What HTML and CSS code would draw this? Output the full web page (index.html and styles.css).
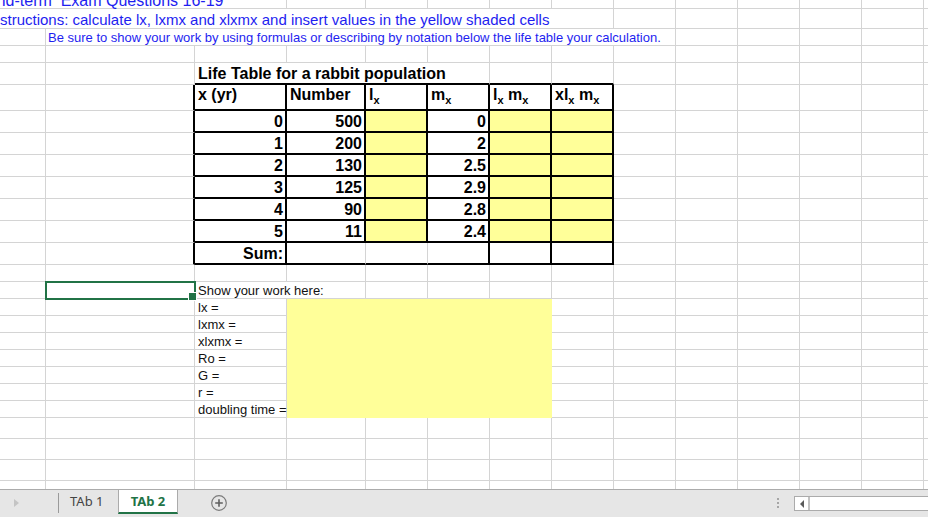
FILE: index.html
```html
<!DOCTYPE html>
<html>
<head>
<meta charset="utf-8">
<title>Life Table</title>
<link rel="stylesheet" href="styles.css">
</head>
<body>
<div class="sheet">
  <!-- row 1 -->
  <div class="row r1">
    <div class="c s3 blue t1"><span>id-term&nbsp; Exam Questions 16-19</span></div>
    <div class="c"></div><div class="c"></div><div class="c"></div><div class="c"></div><div class="c"></div><div class="c"></div><div class="c"></div><div class="c"></div><div class="c"></div><div class="c"></div><div class="c"></div>
  </div>
  <!-- row 2 -->
  <div class="row h20">
    <div class="c s8 blue t2"><span>structions: calculate lx, lxmx and xlxmx and insert values in the yellow shaded cells</span></div>
    <div class="c"></div><div class="c"></div><div class="c"></div><div class="c"></div><div class="c"></div><div class="c"></div>
  </div>
  <!-- row 3 -->
  <div class="row h17">
    <div class="c"></div>
    <div class="c s8 blue t3"><span>Be sure to show your work by using formulas or describing by notation below the life table your calculation.</span></div>
    <div class="c"></div><div class="c"></div><div class="c"></div><div class="c"></div><div class="c"></div>
  </div>
  <!-- row 4 -->
  <div class="row h17">
    <div class="c"></div><div class="c"></div><div class="c"></div><div class="c"></div><div class="c"></div><div class="c"></div><div class="c"></div><div class="c"></div><div class="c"></div><div class="c"></div><div class="c"></div><div class="c"></div><div class="c"></div><div class="c"></div>
  </div>
  <!-- row 5: title -->
  <div class="row h22">
    <div class="c"></div><div class="c"></div>
    <div class="c s4 tb title"><span>Life Table for a rabbit population</span></div>
    <div class="c tb"></div><div class="c tb"></div>
    <div class="c"></div><div class="c"></div><div class="c"></div><div class="c"></div><div class="c"></div><div class="c"></div>
  </div>
  <!-- row 6: header -->
  <div class="row h26">
    <div class="c"></div><div class="c tl"></div>
    <div class="c t hd"><span>x (yr)</span></div>
    <div class="c t hd"><span>Number</span></div>
    <div class="c t hd"><span>l<sub>x</sub></span></div>
    <div class="c t hd"><span>m<sub>x</sub></span></div>
    <div class="c t hd"><span>l<sub>x</sub> m<sub>x</sub></span></div>
    <div class="c t hd"><span>xl<sub>x</sub> m<sub>x</sub></span></div>
    <div class="c"></div><div class="c"></div><div class="c"></div><div class="c"></div><div class="c"></div><div class="c"></div>
  </div>
  <!-- data rows -->
  <div class="row h22">
    <div class="c"></div><div class="c tl"></div>
    <div class="c t num"><span>0</span></div><div class="c t num"><span>500</span></div>
    <div class="c t yl"></div><div class="c t num"><span>0</span></div>
    <div class="c t yl"></div><div class="c t yl"></div>
    <div class="c"></div><div class="c"></div><div class="c"></div><div class="c"></div><div class="c"></div><div class="c"></div>
  </div>
  <div class="row h22">
    <div class="c"></div><div class="c tl"></div>
    <div class="c t num"><span>1</span></div><div class="c t num"><span>200</span></div>
    <div class="c t yl"></div><div class="c t num"><span>2</span></div>
    <div class="c t yl"></div><div class="c t yl"></div>
    <div class="c"></div><div class="c"></div><div class="c"></div><div class="c"></div><div class="c"></div><div class="c"></div>
  </div>
  <div class="row h22">
    <div class="c"></div><div class="c tl"></div>
    <div class="c t num"><span>2</span></div><div class="c t num"><span>130</span></div>
    <div class="c t yl"></div><div class="c t num"><span>2.5</span></div>
    <div class="c t yl"></div><div class="c t yl"></div>
    <div class="c"></div><div class="c"></div><div class="c"></div><div class="c"></div><div class="c"></div><div class="c"></div>
  </div>
  <div class="row h22">
    <div class="c"></div><div class="c tl"></div>
    <div class="c t num"><span>3</span></div><div class="c t num"><span>125</span></div>
    <div class="c t yl"></div><div class="c t num"><span>2.9</span></div>
    <div class="c t yl"></div><div class="c t yl"></div>
    <div class="c"></div><div class="c"></div><div class="c"></div><div class="c"></div><div class="c"></div><div class="c"></div>
  </div>
  <div class="row h22">
    <div class="c"></div><div class="c tl"></div>
    <div class="c t num"><span>4</span></div><div class="c t num"><span>90</span></div>
    <div class="c t yl"></div><div class="c t num"><span>2.8</span></div>
    <div class="c t yl"></div><div class="c t yl"></div>
    <div class="c"></div><div class="c"></div><div class="c"></div><div class="c"></div><div class="c"></div><div class="c"></div>
  </div>
  <div class="row h22">
    <div class="c"></div><div class="c tl"></div>
    <div class="c t num"><span>5</span></div><div class="c t num"><span>11</span></div>
    <div class="c t yl"></div><div class="c t num"><span>2.4</span></div>
    <div class="c t yl"></div><div class="c t yl"></div>
    <div class="c"></div><div class="c"></div><div class="c"></div><div class="c"></div><div class="c"></div><div class="c"></div>
  </div>
  <!-- sum row -->
  <div class="row h22">
    <div class="c"></div><div class="c tl"></div>
    <div class="c t num"><span>Sum:</span></div>
    <div class="c t gr"></div><div class="c t gr"></div><div class="c t"></div>
    <div class="c t"></div><div class="c t"></div>
    <div class="c"></div><div class="c"></div><div class="c"></div><div class="c"></div><div class="c"></div><div class="c"></div>
  </div>
  <!-- row 14 -->
  <div class="row h17">
    <div class="c"></div><div class="c"></div><div class="c"></div><div class="c"></div><div class="c"></div><div class="c"></div><div class="c"></div><div class="c"></div><div class="c"></div><div class="c"></div><div class="c"></div><div class="c"></div><div class="c"></div><div class="c"></div>
  </div>
  <!-- row 15 -->
  <div class="row h17">
    <div class="c"></div><div class="c sel"></div>
    <div class="c s2 w"><span>Show your work here:</span></div>
    <div class="c"></div><div class="c"></div><div class="c"></div><div class="c"></div><div class="c"></div><div class="c"></div><div class="c"></div><div class="c"></div><div class="c"></div><div class="c"></div>
  </div>
  <!-- work rows -->
  <div class="row h17">
    <div class="c"></div><div class="c"></div>
    <div class="c w"><span>lx =</span></div>
    <div class="c wy"></div><div class="c wy"></div><div class="c wy"></div><div class="c wy"></div>
    <div class="c"></div><div class="c"></div><div class="c"></div><div class="c"></div><div class="c"></div><div class="c"></div><div class="c"></div>
  </div>
  <div class="row h17">
    <div class="c"></div><div class="c"></div>
    <div class="c w"><span>lxmx =</span></div>
    <div class="c wy"></div><div class="c wy"></div><div class="c wy"></div><div class="c wy"></div>
    <div class="c"></div><div class="c"></div><div class="c"></div><div class="c"></div><div class="c"></div><div class="c"></div><div class="c"></div>
  </div>
  <div class="row h17">
    <div class="c"></div><div class="c"></div>
    <div class="c w"><span>xlxmx =</span></div>
    <div class="c wy"></div><div class="c wy"></div><div class="c wy"></div><div class="c wy"></div>
    <div class="c"></div><div class="c"></div><div class="c"></div><div class="c"></div><div class="c"></div><div class="c"></div><div class="c"></div>
  </div>
  <div class="row h17">
    <div class="c"></div><div class="c"></div>
    <div class="c w"><span>Ro =</span></div>
    <div class="c wy"></div><div class="c wy"></div><div class="c wy"></div><div class="c wy"></div>
    <div class="c"></div><div class="c"></div><div class="c"></div><div class="c"></div><div class="c"></div><div class="c"></div><div class="c"></div>
  </div>
  <div class="row h17">
    <div class="c"></div><div class="c"></div>
    <div class="c w"><span>G =</span></div>
    <div class="c wy"></div><div class="c wy"></div><div class="c wy"></div><div class="c wy"></div>
    <div class="c"></div><div class="c"></div><div class="c"></div><div class="c"></div><div class="c"></div><div class="c"></div><div class="c"></div>
  </div>
  <div class="row h17">
    <div class="c"></div><div class="c"></div>
    <div class="c w"><span>r =</span></div>
    <div class="c wy"></div><div class="c wy"></div><div class="c wy"></div><div class="c wy"></div>
    <div class="c"></div><div class="c"></div><div class="c"></div><div class="c"></div><div class="c"></div><div class="c"></div><div class="c"></div>
  </div>
  <div class="row h17">
    <div class="c"></div><div class="c"></div>
    <div class="c w"><span>doubling time =</span></div>
    <div class="c wy"></div><div class="c wy"></div><div class="c wy"></div><div class="c wy"></div>
    <div class="c"></div><div class="c"></div><div class="c"></div><div class="c"></div><div class="c"></div><div class="c"></div><div class="c"></div>
  </div>
  <!-- empty rows -->
  <div class="row h21">
    <div class="c"></div><div class="c"></div><div class="c"></div><div class="c"></div><div class="c"></div><div class="c"></div><div class="c"></div><div class="c"></div><div class="c"></div><div class="c"></div><div class="c"></div><div class="c"></div><div class="c"></div><div class="c"></div>
  </div>
  <div class="row h21">
    <div class="c"></div><div class="c"></div><div class="c"></div><div class="c"></div><div class="c"></div><div class="c"></div><div class="c"></div><div class="c"></div><div class="c"></div><div class="c"></div><div class="c"></div><div class="c"></div><div class="c"></div><div class="c"></div>
  </div>
  <div class="row h21">
    <div class="c"></div><div class="c"></div><div class="c"></div><div class="c"></div><div class="c"></div><div class="c"></div><div class="c"></div><div class="c"></div><div class="c"></div><div class="c"></div><div class="c"></div><div class="c"></div><div class="c"></div><div class="c"></div>
  </div>
  <div class="row h21">
    <div class="c"></div><div class="c"></div><div class="c"></div><div class="c"></div><div class="c"></div><div class="c"></div><div class="c"></div><div class="c"></div><div class="c"></div><div class="c"></div><div class="c"></div><div class="c"></div><div class="c"></div><div class="c"></div>
  </div>
</div>

<div class="tabbar">
  <div class="nav"></div>
  <div class="sep"></div>
  <div class="tab tab1">TAb 1</div>
  <div class="tab tab2">TAb 2</div>
  <div class="plus">
    <svg width="16" height="16" viewBox="0 0 16 16"><circle cx="8" cy="8" r="7.3" fill="none" stroke="#7b7b7b" stroke-width="1.2"/><path d="M8 4.2v7.6M4.2 8h7.6" stroke="#5f5f5f" stroke-width="1.6"/></svg>
  </div>
  <div class="spacer"></div>
  <div class="dots">
    <svg width="2" height="10" viewBox="0 0 2 10"><rect x="0" y="0" width="2" height="2" fill="#a6a6a6"/><rect x="0" y="4" width="2" height="2" fill="#a6a6a6"/><rect x="0" y="8" width="2" height="2" fill="#a6a6a6"/></svg>
  </div>
  <div class="scroll">
    <div class="sbtn"><div class="larrow"></div></div>
    <div class="track"></div>
  </div>
</div>
</body>
</html>
```
FILE: styles.css
```css
* { box-sizing: border-box; }
html, body { margin: 0; padding: 0; }
body {
  width: 928px;
  height: 517px;
  overflow: hidden;
  background: #fff;
  font-family: "Liberation Sans", Arial, sans-serif;
  color: #000;
}
.sheet {
  height: 489px;
  overflow: hidden;
}
.row {
  display: grid;
  grid-template-columns: 46px 149px 92px 79px repeat(10, 62px);
  width: 986px;
}
.r1 { height: 21px; margin-top: -12px; }
.h17 { height: 17px; }
.h20 { height: 20px; }
.h21 { height: 21px; }
.h22 { height: 22px; }
.h26 { height: 26px; }

.c {
  border-right: 1px solid #d4d4d4;
  border-bottom: 1px solid #d4d4d4;
  display: flex;
  align-items: flex-end;
  white-space: nowrap;
  padding: 0 2px 0 3px;
  min-width: 0;
}
.s2 { grid-column: span 2; }
.s3 { grid-column: span 3; }
.s4 { grid-column: span 4; }
.s8 { grid-column: span 8; }

.blue { color: #1e1ef0; }
.t1 { font-size: 16px; line-height: 15px; padding-left: 2px; }
.t2 { font-size: 15px; padding-left: 0; }
.t3 { font-size: 13px; padding-left: 2px; }

.title { font-size: 16px; font-weight: bold; }

.tb { border-bottom: 2px solid #000; }
.tl { border-right: 2px solid #000; }
.t {
  border-right: 2px solid #000;
  border-bottom: 2px solid #000;
  font-size: 16px;
  font-weight: bold;
}
.t.gr { border-right: 1px solid #d4d4d4; }
.hd { align-items: flex-start; padding-top: 1px; }
.hd sub {
  font-size: 11px;
  vertical-align: -4px;
  line-height: 0;
}
.num { justify-content: flex-end; }
.yl { background: #ffff99; }

.w { font-size: 13px; color: #111; }
.wy { background: #ffff99; border-color: #ffff99; }

.sel {
  position: relative;
  outline: 2px solid #217346;
  outline-offset: -1px;
}
.sel::after {
  content: "";
  position: absolute;
  right: -3px;
  bottom: -3px;
  width: 7px;
  height: 7px;
  background: #217346;
  border: 1px solid #fff;
  z-index: 5;
}

/* sheet tabs */
.tabbar {
  height: 28px;
  background: #e6e6e6;
  border-top: 1px solid #ababab;
  display: flex;
  align-items: flex-start;
  font-family: "Noto Sans", "Open Sans", sans-serif;
  font-size: 13px;
}
.nav {
  margin: 9px 0 0 14px;
  width: 0;
  height: 0;
  border-left: 5px solid #c4c4c4;
  border-top: 4px solid transparent;
  border-bottom: 4px solid transparent;
}
.sep {
  margin: 3px 0 0 39px;
  width: 1px;
  height: 20px;
  background: #9a9a9a;
}
.tab { height: 24px; }
.tab1 {
  width: 59px;
  padding-left: 11px;
  line-height: 23px;
  color: #444;
}
.tab2 {
  width: 60px;
  background: #fff;
  border-left: 1px solid #ababab;
  border-right: 1px solid #ababab;
  border-bottom: 2px solid #217346;
  text-align: center;
  line-height: 22px;
  font-weight: bold;
  color: #217346;
}
.plus {
  margin: 5px 0 0 33px;
  width: 16px;
  height: 16px;
}
.plus svg { display: block; }
.spacer { flex: 1; }
.dots {
  margin: 8px 15px 0 0;
  width: 2px;
  height: 10px;
}
.dots svg { display: block; }
.scroll {
  margin-top: 6px;
  width: 134px;
  height: 15px;
  border: 1px solid #ababab;
  border-right: none;
  background: #fff;
  display: flex;
}
.sbtn {
  width: 15px;
  border-right: 2px solid #c2c2c2;
  display: flex;
  align-items: center;
  justify-content: center;
}
.larrow {
  width: 0;
  height: 0;
  border-right: 4px solid #5a5a5a;
  border-top: 4px solid transparent;
  border-bottom: 4px solid transparent;
}
.track { flex: 1; }
```
